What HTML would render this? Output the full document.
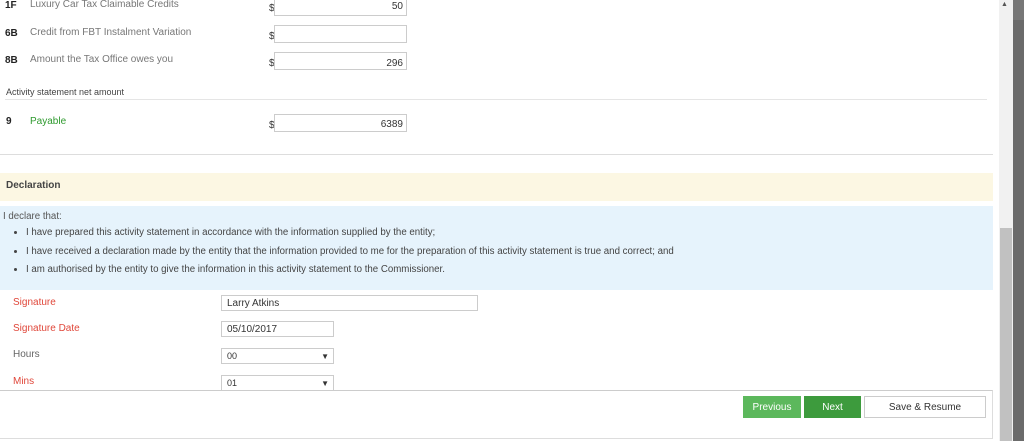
<!DOCTYPE html>
<html><head><style>
body{margin:0;width:1024px;height:441px;overflow:hidden;background:#fff;font-family:"Liberation Sans",Arial,sans-serif;position:relative}
.a{position:absolute;white-space:nowrap}
.code{font-size:10px;color:#222;font-weight:bold}
.lbl{font-size:10px;color:#777}
.dol{font-size:10px;color:#333}
.inp{position:absolute;border:1px solid #ccc;background:#fff;box-sizing:border-box;font-size:10px;color:#333;text-align:right;padding-right:3px;line-height:20px}
.red{font-size:10px;color:#e0473a}
.box{position:absolute;border:1px solid #ccc;box-sizing:border-box;background:#fff;font-size:9px;color:#333;padding-left:5px;line-height:15px}
.tri{position:absolute;right:4px;top:0;font-size:8px}
</style></head><body>
<div class="a code" style="left:5px;top:0px">1F</div><div class="a lbl" style="left:30px;top:-1px">Luxury Car Tax Claimable Credits</div>
<div class="a dol" style="left:269px;top:3px">$</div><div class="inp" style="left:274px;top:-4px;width:133px;height:20px">50</div>
<div class="a code" style="left:5px;top:28px">6B</div><div class="a lbl" style="left:30px;top:27px">Credit from FBT Instalment Variation</div>
<div class="a dol" style="left:269px;top:31px">$</div><div class="inp" style="left:274px;top:25px;width:133px;height:18px"></div>
<div class="a code" style="left:5px;top:55px">8B</div><div class="a lbl" style="left:30px;top:54px">Amount the Tax Office owes you</div>
<div class="a dol" style="left:269px;top:58px">$</div><div class="inp" style="left:274px;top:52px;width:133px;height:18px;line-height:21px">296</div>
<div class="a" style="left:6px;top:87px;font-size:9px;color:#444">Activity statement net amount</div>
<div class="a" style="left:5px;top:99px;width:982px;border-top:1px solid #e5e5e5"></div>
<div class="a code" style="left:6px;top:116px">9</div><div class="a" style="left:30px;top:116px;font-size:10px;color:#2e9a2e">Payable</div>
<div class="a dol" style="left:269px;top:120px">$</div><div class="inp" style="left:274px;top:114px;width:133px;height:18px;line-height:19px">6389</div>
<div class="a" style="left:0;top:154px;width:993px;border-top:1px solid #ddd"></div>
<div class="a" style="left:0;top:173px;width:993px;height:28px;background:#fcf7e3"></div>
<div class="a" style="left:6px;top:180px;font-size:10px;color:#444;font-weight:bold">Declaration</div>
<div class="a" style="left:0;top:206px;width:993px;height:84px;background:#e6f3fc"></div>
<div class="a" style="left:3px;top:211px;font-size:9.7px;color:#555">I declare that:</div>
<ul class="a" style="left:0;top:226px;margin:0;padding-left:26px;font-size:9.7px;color:#444;line-height:13px">
<li style="margin-bottom:6px">I have prepared this activity statement in accordance with the information supplied by the entity;</li>
<li style="margin-bottom:5px">I have received a declaration made by the entity that the information provided to me for the preparation of this activity statement is true and correct; and</li>
<li>I am authorised by the entity to give the information in this activity statement to the Commissioner.</li></ul>
<div class="a red" style="left:13px;top:297px">Signature</div>
<div class="box" style="left:221px;top:295px;width:257px;height:16px;font-size:10px">Larry Atkins</div>
<div class="a red" style="left:13px;top:323px">Signature Date</div>
<div class="box" style="left:221px;top:321px;width:113px;height:16px;font-size:10px">05/10/2017</div>
<div class="a" style="left:13px;top:349px;font-size:10px;color:#666">Hours</div>
<div class="box" style="left:221px;top:348px;width:113px;height:16px">00<span class="tri">▼</span></div>
<div class="a red" style="left:13px;top:376px">Mins</div>
<div class="box" style="left:221px;top:375px;width:113px;height:16px">01<span class="tri">▼</span></div>
<div class="a" style="left:0;top:390px;width:993px;height:49px;border-top:1px solid #ccc;border-bottom:1px solid #ddd;border-right:1px solid #ddd;box-sizing:border-box;background:#fff"></div>
<div class="a" style="left:743px;top:396px;width:58px;height:22px;background:#5cb85c;color:#fff;font-size:10px;text-align:center;line-height:24px">Previous</div>
<div class="a" style="left:804px;top:396px;width:57px;height:22px;background:#3d9b3d;color:#fff;font-size:10px;text-align:center;line-height:24px">Next</div>
<div class="a" style="left:864px;top:396px;width:122px;height:22px;border:1px solid #ccc;box-sizing:border-box;background:#fff;color:#333;font-size:10px;text-align:center;line-height:22px">Save &amp; Resume</div>
<div class="a" style="left:999px;top:0;width:14px;height:441px;background:#f1f1f1"></div>
<div class="a" style="left:1000px;top:228px;width:12px;height:213px;background:#c1c1c1"></div>
<div class="a" style="left:1001px;top:1px;font-size:7px;color:#555">▲</div>
<div class="a" style="left:1013px;top:0;width:11px;height:441px;background:#6b6b6b"></div>
<div class="a" style="left:1013px;top:0;width:11px;height:20px;background:#777"></div>
</body></html>
